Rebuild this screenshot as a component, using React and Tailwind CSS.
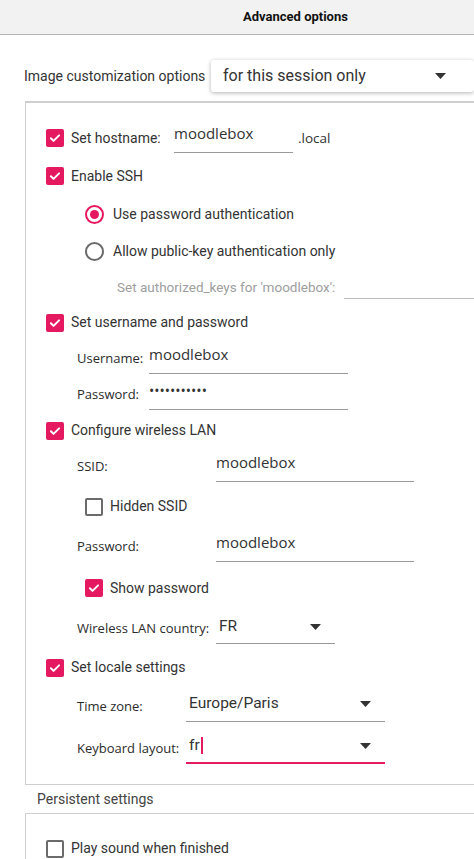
import React from "react";

function Check({ checked }) {
  if (!checked)
    return <div className="w-[18px] h-[18px] rounded-[2px] border-2 border-[#6b6b6b] bg-white shrink-0" />;
  return (
    <div className="w-[18px] h-[18px] rounded-[2px] bg-[#e5195f] flex items-center justify-center shrink-0">
      <svg width="14" height="14" viewBox="0 0 24 24" fill="none" stroke="white" strokeWidth="3.4" strokeLinecap="round" strokeLinejoin="round">
        <path d="M5 12.5l4.5 4.5L19 7.5" />
      </svg>
    </div>
  );
}

function Radio({ checked }) {
  return (
    <div
      className={`w-[19px] h-[19px] rounded-full border-2 flex items-center justify-center shrink-0 ${
        checked ? "border-[#e5195f]" : "border-[#6b6b6b]"
      }`}
    >
      {checked && <div className="w-[9px] h-[9px] rounded-full bg-[#e5195f]" />}
    </div>
  );
}

function Caret() {
  return (
    <svg width="11" height="6" viewBox="0 0 11 6">
      <path d="M0 0h11L5.5 6z" fill="#333" />
    </svg>
  );
}

function Field({ value, w, select, focus, small }) {
  return (
    <div
      className={`h-[30px] flex items-center justify-between ${select ? "pl-[3px] pb-[4px]" : "pl-0 pb-[8px]"} ${
        focus ? "border-b-2 border-[#e5195f]" : "border-b border-[#9a9a9a]"
      } ${w}`}
    >
      <span
        className={`text-[#333] ${small ? "text-[14px]" : select ? "text-[15.5px]" : "text-[15px]"}`}
        style={{ fontFamily: select ? "Roboto, sans-serif" : "'Open Sans', sans-serif" }}
      >
        {value}
        {focus && <span className="inline-block w-[2px] h-[17px] bg-[#e5195f] align-middle ml-[1px]" />}
      </span>
      {select && (
        <span className="pr-[14px]">
          <Caret />
        </span>
      )}
    </div>
  );
}

function SubLabel({ children, w }) {
  return (
    <div className={`text-[13px] font-medium text-[#2b2b2b] whitespace-nowrap ${w}`} style={{ fontFamily: "'Open Sans', sans-serif" }}>
      {children}
    </div>
  );
}

export default function App() {
  return (
    <div className="w-[474px] h-[859px] bg-white overflow-hidden text-[#333]" style={{ fontFamily: "Roboto, sans-serif" }}>
      {/* header */}
      <div className="h-[35px] bg-[#f2f2f2] border-b border-[#b5b5b5] flex items-center pl-[243px]">
        <span className="text-[13px] font-bold text-[#111]">Advanced options</span>
      </div>

      {/* image customization */}
      <div className="flex items-center pl-[24px] mt-[25px] h-[32px]">
        <span className="text-[14px] text-[#333] w-[187px] whitespace-nowrap">Image customization options</span>
        <div className="flex-1 h-[32px] bg-white rounded-[3px] shadow-[0_1px_4px_rgba(0,0,0,0.3)] flex items-center justify-between pl-[12px] pr-[28px]">
          <span className="text-[16px] text-[#333]">for this session only</span>
          <Caret />
        </div>
      </div>

      {/* main group */}
      <div className="ml-[25px] mt-[9px] border-l border-t-2 border-b border-[#cfcfcf] pt-[16px] pb-[14px] text-[14px]">
        <div className="h-[38px] flex items-center pl-[20px]">
          <Check checked />
          <span className="ml-[7px] w-[103px]">Set hostname:</span>
          <Field value="moodlebox" w="w-[119px]" />
          <span className="ml-[5px] text-[13.5px]" style={{ fontFamily: "'Open Sans', sans-serif" }}>.local</span>
        </div>
        <div className="h-[38px] flex items-center pl-[20px]">
          <Check checked />
          <span className="ml-[7px]">Enable SSH</span>
        </div>
        <div className="h-[38px] flex items-center pl-[59px]">
          <Radio checked />
          <span className="ml-[9px]">Use password authentication</span>
        </div>
        <div className="h-[37px] flex items-center pl-[59px]">
          <Radio />
          <span className="ml-[9px]">Allow public-key authentication only</span>
        </div>
        <div className="h-[35px] flex items-center pl-[91px]">
          <span className="text-[13.5px] text-[#9e9e9e] w-[227px]">Set authorized_keys for 'moodlebox':</span>
          <div className="flex-1 self-end mb-[6px] border-b border-[#bdbdbd]" />
        </div>
        <div className="h-[35px] flex items-center pl-[20px]">
          <Check checked />
          <span className="ml-[7px]">Set username and password</span>
        </div>
        <div className="h-[37px] flex items-center pl-[51px]">
          <SubLabel w="w-[72px]">Username:</SubLabel>
          <Field value="moodlebox" w="w-[199px]" />
        </div>
        <div className="h-[36px] flex items-center pl-[51px]">
          <SubLabel w="w-[72px]">Password:</SubLabel>
          <Field value="•••••••••••" w="w-[199px]" small />
        </div>
        <div className="h-[35px] flex items-center pl-[20px]">
          <Check checked />
          <span className="ml-[7px]">Configure wireless LAN</span>
        </div>
        <div className="h-[38px] flex items-center pl-[51px]">
          <SubLabel w="w-[139px]">SSID:</SubLabel>
          <Field value="moodlebox" w="w-[198px]" />
        </div>
        <div className="h-[41px] flex items-center pl-[59px]">
          <Check />
          <span className="ml-[7px]">Hidden SSID</span>
        </div>
        <div className="h-[40px] flex items-center pl-[51px]">
          <SubLabel w="w-[139px]">Password:</SubLabel>
          <Field value="moodlebox" w="w-[198px]" />
        </div>
        <div className="h-[42px] flex items-center pl-[59px]">
          <Check checked />
          <span className="ml-[7px]">Show password</span>
        </div>
        <div className="h-[40px] flex items-center pl-[51px]">
          <SubLabel w="w-[139px]">Wireless LAN country:</SubLabel>
          <Field value="FR" w="w-[119px]" select />
        </div>
        <div className="h-[37px] flex items-center pl-[20px]">
          <Check checked />
          <span className="ml-[7px]">Set locale settings</span>
        </div>
        <div className="h-[41px] flex items-center pl-[51px]">
          <SubLabel w="w-[109px]">Time zone:</SubLabel>
          <Field value="Europe/Paris" w="w-[199px]" select />
        </div>
        <div className="h-[43px] flex items-center pl-[51px]">
          <SubLabel w="w-[109px]">Keyboard layout:</SubLabel>
          <Field value="fr" w="w-[199px]" select focus />
        </div>
      </div>

      {/* persistent */}
      <div className="pl-[37px] h-[28px] flex items-center text-[14px] text-[#444]">Persistent settings</div>
      <div className="ml-[25px] border-l border-t border-[#cfcfcf] h-[60px] pt-[24px] pl-[20px]">
        <div className="flex items-center text-[14px]">
          <Check />
          <span className="ml-[7px]">Play sound when finished</span>
        </div>
      </div>
    </div>
  );
}
